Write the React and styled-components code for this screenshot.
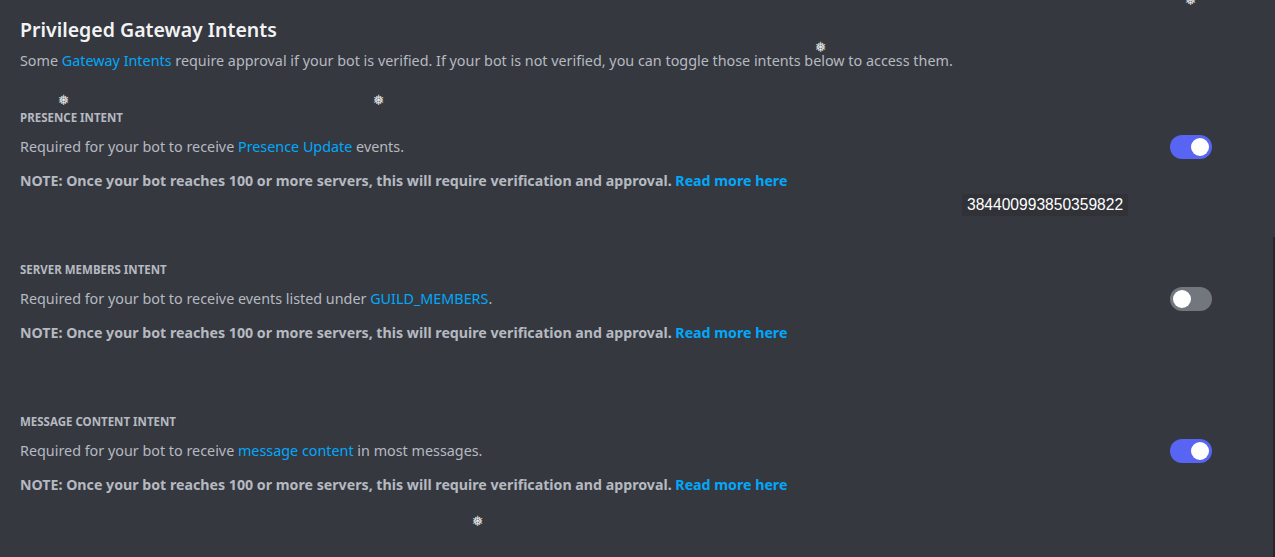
import React from "react";
import styled, { createGlobalStyle } from "styled-components";

const GlobalStyle = createGlobalStyle`
  html, body {
    margin: 0;
    padding: 0;
    background: #36383f;
  }
  body {
    font-family: "Noto Sans", sans-serif;
  }
`;

const intents = [
  {
    label: "PRESENCE INTENT",
    before: "Required for your bot to receive ",
    link: "Presence Update",
    after: " events.",
    on: true,
  },
  {
    label: "SERVER MEMBERS INTENT",
    before: "Required for your bot to receive events listed under ",
    link: "GUILD_MEMBERS",
    after: ".",
    on: false,
  },
  {
    label: "MESSAGE CONTENT INTENT",
    before: "Required for your bot to receive ",
    link: "message content",
    after: " in most messages.",
    on: true,
  },
];

const flakes = [
  { x: 58, y: 92 },
  { x: 373, y: 92 },
  { x: 815, y: 39 },
  { x: 472, y: 513 },
  { x: 1185, y: -8 },
];

function App() {
  return (
    <Page>
      <GlobalStyle />
      <Title>Privileged Gateway Intents</Title>
      <Intro>
        Some <Link>Gateway Intents</Link> require approval if your bot is
        verified. If your bot is not verified, you can toggle those intents
        below to access them.
      </Intro>

      <List>
        {intents.map((item) => (
          <Intent key={item.label}>
            <Label>{item.label}</Label>
            <Row>
              <Text>
                {item.before}
                <Link>{item.link}</Link>
                {item.after}
              </Text>
              <Switch $on={item.on}>
                <Knob $on={item.on} />
              </Switch>
            </Row>
            <Note>
              NOTE: Once your bot reaches 100 or more servers, this will
              require verification and approval. <Link>Read more here</Link>
            </Note>
          </Intent>
        ))}
      </List>

      <IdTag>384400993850359822</IdTag>
      {flakes.map((f, i) => (
        <Flake key={i} style={{ left: f.x, top: f.y }}>
          ❅
        </Flake>
      ))}
      <ScrollEdge />
    </Page>
  );
}

const Page = styled.div`
  position: relative;
  box-sizing: border-box;
  width: 1275px;
  height: 557px;
  overflow: hidden;
  padding: 18px 63px 0 20px;
  background: #36383f;
`;

const Title = styled.h2`
  margin: 0;
  font-size: 19.5px;
  line-height: 24px;
  font-weight: 600;
  color: #f2f3f5;
`;

const Intro = styled.p`
  margin: 9px 0 0;
  font-size: 14.35px;
  line-height: 20px;
  color: #b5bac1;
`;

const Link = styled.span`
  color: #00a8fc;
  cursor: pointer;
`;

const List = styled.div`
  display: flex;
  flex-direction: column;
  gap: 71px;
  margin-top: 39px;
`;

const Intent = styled.section`
  display: flex;
  flex-direction: column;
`;

const Label = styled.div`
  font-size: 11.5px;
  line-height: 16px;
  font-weight: 700;
  color: #b5bac1;
`;

const Row = styled.div`
  display: flex;
  align-items: center;
  justify-content: space-between;
  margin-top: 9px;
`;

const Text = styled.div`
  font-size: 14.35px;
  line-height: 24px;
  color: #b5bac1;
`;

const Switch = styled.div`
  position: relative;
  width: 42px;
  height: 24px;
  border-radius: 12px;
  background: ${(p) => (p.$on ? "#5865f2" : "#72767d")};
  cursor: pointer;
`;

const Knob = styled.div`
  position: absolute;
  top: 3px;
  left: ${(p) => (p.$on ? "21px" : "3px")};
  width: 18px;
  height: 18px;
  border-radius: 50%;
  background: #ffffff;
`;

const Note = styled.div`
  margin-top: 12px;
  font-size: 14.2px;
  line-height: 20px;
  font-weight: 700;
  color: #b5bac1;
`;

const IdTag = styled.div`
  position: absolute;
  left: 962px;
  top: 194px;
  padding: 1px 5px;
  font-family: "Liberation Sans", Arial, sans-serif;
  font-size: 15.6px;
  line-height: 20px;
  color: #ffffff;
  background: #303238;
`;

const Flake = styled.span`
  position: absolute;
  font-family: "DejaVu Sans", sans-serif;
  font-size: 14px;
  line-height: 16px;
  color: #e8e8e8;
  pointer-events: none;
`;

const ScrollEdge = styled.div`
  position: absolute;
  right: 0;
  top: 237px;
  bottom: 0;
  width: 2px;
  background: #24262b;
`;

export default App;
